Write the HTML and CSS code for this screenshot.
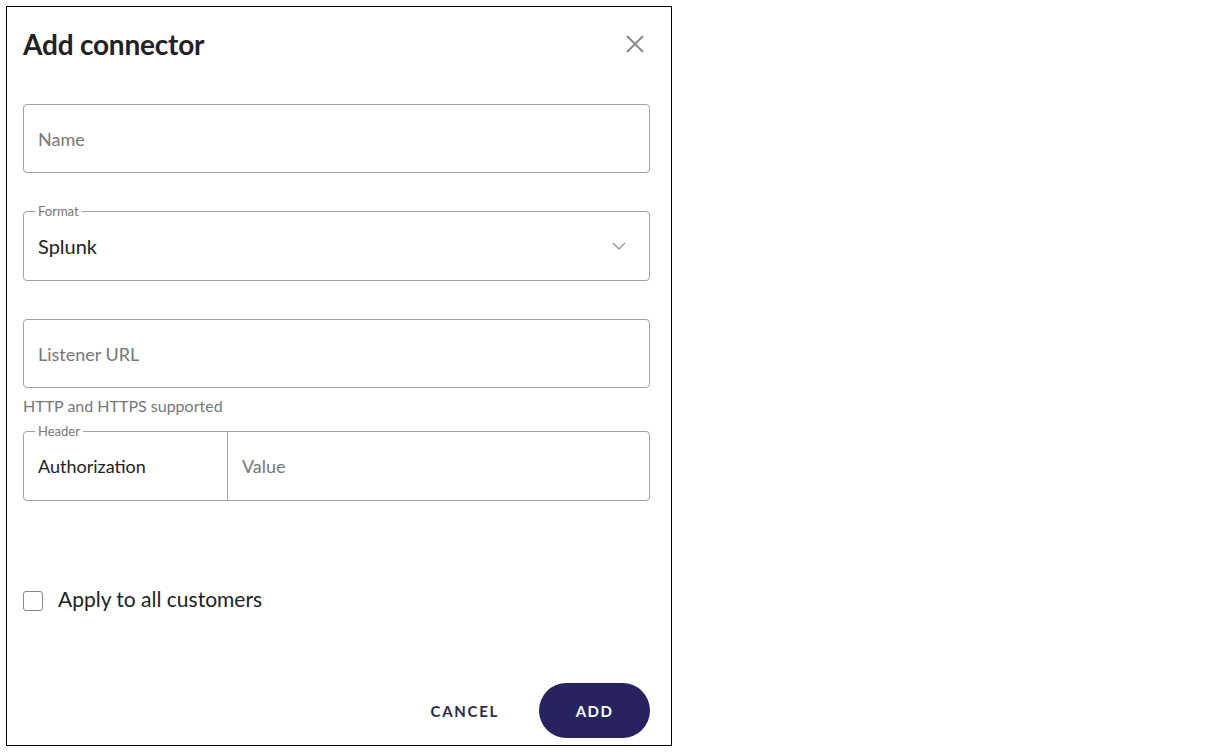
FILE: index.html
```html
<!DOCTYPE html>
<html>
<head>
<meta charset="utf-8">
<link rel="stylesheet" href="styles.css">
</head>
<body>
<div class="dialog">
  <div class="head">
    <h1 class="title">Add connector</h1>
    <button class="close" aria-label="Close">
      <svg width="20" height="20" viewBox="0 0 20 20"><path d="M2 2 L18 18 M18 2 L2 18" stroke="#8a8a8a" stroke-width="2" fill="none"/></svg>
    </button>
  </div>
  <div class="form">
    <div class="field f-name"><span class="ph">Name</span></div>
    <div class="field f-format">
      <span class="notch">Format</span>
      <span class="val">Splunk</span>
      <svg class="chev" width="14" height="8" viewBox="0 0 14 8"><path d="M1 1 L7 7 L13 1" stroke="#8a8a8a" stroke-width="1.2" fill="none"/></svg>
    </div>
    <div class="field f-url"><span class="ph">Listener URL</span></div>
    <div class="helper">HTTP and HTTPS supported</div>
    <div class="field f-header">
      <span class="notch">Header</span>
      <div class="hkey"><span class="val2">Authorization</span></div>
      <div class="hval"><span class="ph">Value</span></div>
    </div>
    <label class="check">
      <span class="box"></span>
      <span class="check-text">Apply to all customers</span>
    </label>
  </div>
  <div class="actions">
    <button class="btn-cancel">CANCEL</button>
    <button class="btn-add">ADD</button>
  </div>
</div>
</body>
</html>
```

FILE: styles.css
```css
* { box-sizing: border-box; }
html, body { margin: 0; padding: 0; background: #fff; }
body { font-family: "Lato", "Open Sans", sans-serif; color: #222; }

.dialog {
  margin: 6px;
  width: 666px;
  height: 740px;
  border: 1px solid #000;
  padding: 0 21px 0 16px;
  display: flex;
  flex-direction: column;
}

.head {
  display: flex;
  align-items: center;
  justify-content: space-between;
  height: 74px;
}
.title {
  margin: 0;
  font-size: 28px;
  font-weight: 700;
  color: #222;
  letter-spacing: -0.2px;
}
.close {
  border: 0;
  background: none;
  padding: 0;
  width: 20px;
  height: 20px;
  margin-right: 5px;
  cursor: pointer;
  display: flex;
}

.form {
  display: flex;
  flex-direction: column;
  margin-top: 23px;
}
.field {
  position: relative;
  height: 69px;
  border: 1px solid #a0a0a0;
  border-radius: 4px;
  display: flex;
  align-items: center;
  padding: 0 14px;
}
.f-format { margin-top: 38px; height: 70px; }
.f-url { margin-top: 38px; }
.ph { color: #777; font-size: 18px; }
.val { font-size: 20px; color: #222; flex: 1; }
.val2 { font-size: 18px; color: #222; }
.chev { margin-right: 9px; }

.notch {
  position: absolute;
  left: 11px;
  top: -9px;
  background: #fff;
  padding: 0 3px;
  font-size: 13px;
  line-height: 16px;
  color: #777;
}

.helper {
  margin-top: 9px;
  font-size: 16px;
  color: #777;
  line-height: 18px;
}

.f-header {
  margin-top: 16px;
  padding: 0;
  height: 70px;
}
.hkey {
  width: 204px;
  height: 100%;
  border-right: 1px solid #a0a0a0;
  display: flex;
  align-items: center;
  padding-left: 14px;
}
.hval {
  flex: 1;
  display: flex;
  align-items: center;
  padding-left: 14px;
}

.check {
  margin-top: 84px;
  display: flex;
  align-items: center;
  gap: 15px;
}
.box {
  width: 20px;
  height: 20px;
  margin-top: 6px;
  border: 1px solid #888;
  border-radius: 3px;
}
.check-text { font-size: 21px; color: #222; }

.actions {
  margin-top: auto;
  margin-bottom: 7px;
  display: flex;
  justify-content: flex-end;
  align-items: center;
  gap: 40px;
}
.btn-cancel {
  border: 0;
  background: none;
  font-family: inherit;
  font-size: 15px;
  font-weight: 700;
  letter-spacing: 1.7px;
  color: #2b2a48;
  padding: 0;
}
.btn-add {
  border: 0;
  width: 111px;
  height: 55px;
  border-radius: 28px;
  background: #26235f;
  color: #fff;
  font-family: inherit;
  font-size: 15px;
  font-weight: 700;
  letter-spacing: 1.5px;
}
```
